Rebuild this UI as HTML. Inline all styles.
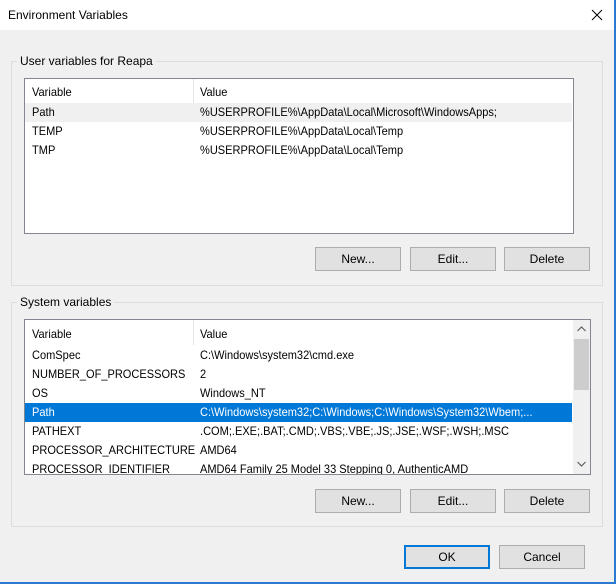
<!DOCTYPE html>
<html><head><style>
*{margin:0;padding:0;box-sizing:border-box}
body{width:616px;height:584px;background:#f0f0f0;position:relative;overflow:hidden;font-family:"Liberation Sans",sans-serif;font-size:12px;color:#000}
.a{position:absolute}
.title{left:0;top:0;width:616px;height:30px;background:#fff}
.grp{border:1px solid #dcdcdc}
.lbl{background:#f0f0f0;padding:0 3px;line-height:14px}
.list{background:#fff;border:1px solid #828790;overflow:hidden}
.hdr{position:absolute;left:0;top:0;height:24px;width:100%}
.row{position:absolute;left:0;height:19px;line-height:19px;white-space:nowrap}
.c1,.c2{position:absolute;transform:scaleX(0.92);transform-origin:0 50%;white-space:nowrap}
.c1{left:7px}
.c2{left:175px}
.btn{background:#e1e1e1;border:1px solid #adadad;text-align:center;line-height:22px}
</style></head><body>
<div class="a title"></div>
<div class="a" style="left:8px;top:8px;font-size:12px">Environment Variables</div>
<svg class="a" style="left:591px;top:9px" width="12" height="12"><path d="M1 1L11 11M11 1L1 11" stroke="#000" stroke-width="1"/></svg>
<div class="a" style="left:614px;top:0;width:2px;height:584px;background:#2b79d0"></div>
<div class="a" style="left:0;top:582px;width:616px;height:2px;background:#2b79d0"></div>

<div class="a grp" style="left:11px;top:61px;width:592px;height:225px"></div>
<div class="a lbl" style="left:17px;top:54px">User variables for Reapa</div>
<div class="a list" style="left:24px;top:78px;width:550px;height:156px">
 <div class="hdr"><span class="c1" style="top:6px">Variable</span><div style="position:absolute;left:168px;top:0;width:1px;height:24px;background:#e5e5e5"></div><span class="c2" style="top:6px">Value</span></div>
 <div class="row" style="top:24px;width:547px;background:#f0f0f0"><span class="c1">Path</span><span class="c2">%USERPROFILE%\AppData\Local\Microsoft\WindowsApps;</span></div>
 <div class="row" style="top:43px"><span class="c1">TEMP</span><span class="c2">%USERPROFILE%\AppData\Local\Temp</span></div>
 <div class="row" style="top:62px"><span class="c1">TMP</span><span class="c2">%USERPROFILE%\AppData\Local\Temp</span></div>
</div>
<div class="a btn" style="left:315px;top:247px;width:86px;height:24px">New...</div>
<div class="a btn" style="left:410px;top:247px;width:86px;height:24px">Edit...</div>
<div class="a btn" style="left:504px;top:247px;width:86px;height:24px">Delete</div>

<div class="a grp" style="left:11px;top:302px;width:592px;height:225px"></div>
<div class="a lbl" style="left:17px;top:295px">System variables</div>
<div class="a list" style="left:24px;top:319px;width:567px;height:156px">
 <div class="hdr"><span class="c1" style="top:7px">Variable</span><div style="position:absolute;left:168px;top:0;width:1px;height:25px;background:#e5e5e5"></div><span class="c2" style="top:7px">Value</span></div>
 <div class="row" style="top:26px"><span class="c1">ComSpec</span><span class="c2">C:\Windows\system32\cmd.exe</span></div>
 <div class="row" style="top:45px"><span class="c1">NUMBER_OF_PROCESSORS</span><span class="c2">2</span></div>
 <div class="row" style="top:64px"><span class="c1">OS</span><span class="c2">Windows_NT</span></div>
 <div class="row" style="top:83px;width:547px;background:#0078d7;color:#fff"><span class="c1">Path</span><span class="c2">C:\Windows\system32;C:\Windows;C:\Windows\System32\Wbem;...</span></div>
 <div class="row" style="top:102px"><span class="c1">PATHEXT</span><span class="c2">.COM;.EXE;.BAT;.CMD;.VBS;.VBE;.JS;.JSE;.WSF;.WSH;.MSC</span></div>
 <div class="row" style="top:121px"><span class="c1">PROCESSOR_ARCHITECTURE</span><span class="c2">AMD64</span></div>
 <div class="row" style="top:140px"><span class="c1">PROCESSOR_IDENTIFIER</span><span class="c2">AMD64 Family 25 Model 33 Stepping 0, AuthenticAMD</span></div>
 <div style="position:absolute;left:548px;top:0;width:17px;height:154px;background:#f0f0f0"></div>
 <div style="position:absolute;left:549px;top:19px;width:15px;height:51px;background:#cdcdcd"></div>
 <svg style="position:absolute;left:552px;top:6px" width="9" height="6"><path d="M0.5 5L4.5 1L8.5 5" fill="none" stroke="#606060" stroke-width="1.2"/></svg>
 <svg style="position:absolute;left:552px;top:141px" width="9" height="6"><path d="M0.5 1L4.5 5L8.5 1" fill="none" stroke="#606060" stroke-width="1.2"/></svg>
</div>
<div class="a btn" style="left:315px;top:489px;width:86px;height:24px">New...</div>
<div class="a btn" style="left:410px;top:489px;width:86px;height:24px">Edit...</div>
<div class="a btn" style="left:504px;top:489px;width:86px;height:24px">Delete</div>

<div class="a btn" style="left:404px;top:545px;width:86px;height:24px;border:2px solid #0078d7;line-height:20px">OK</div>
<div class="a btn" style="left:499px;top:545px;width:86px;height:24px">Cancel</div>
</body></html>
